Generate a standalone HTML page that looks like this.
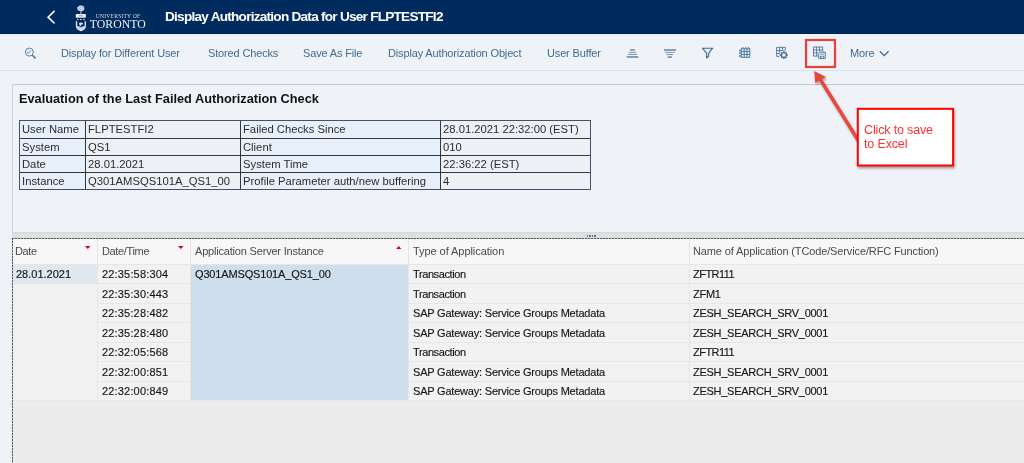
<!DOCTYPE html>
<html><head><meta charset="utf-8">
<style>
*{margin:0;padding:0;box-sizing:border-box}
html,body{width:1024px;height:463px;overflow:hidden;background:#eff3f8;font-family:"Liberation Sans",sans-serif;position:relative}
.a{position:absolute;white-space:nowrap}
.gs,.it,.tht,.tdt,.tbt,#title,#ptitle{will-change:transform}
#hdr{left:0;top:0;width:1024px;height:34px;background:#002b5e;border-bottom:1px solid #00234f}
#title{left:165px;top:10px;font-size:13.6px;line-height:14px;font-weight:bold;color:#fff;letter-spacing:-0.75px}
#tb{left:0;top:34px;width:1024px;height:37px;background:#eff3f8;border-bottom:1px solid #d8e2ed}
.tbt{top:47.4px;font-size:11px;line-height:12px;color:#3f6b92;letter-spacing:-0.15px}
#panel{left:12px;top:84px;width:1012px;height:149px;border-top:1px solid #c6c8cb;border-left:1px solid #cfd2d6;background:#eff3f8}
#ptitle{left:19px;top:91px;font-size:12.75px;font-weight:bold;color:#111}
#splitter{left:12px;top:232px;width:1012px;height:6px;background:linear-gradient(#d3d5d7 0,#dcdddd 1px,#e0e0e0 3px,#dfdfdf 6px)}
#dotsh{left:12px;top:238px;width:1012px;height:1px;background:repeating-linear-gradient(90deg,#5a5a5a 0 2px,#bdbdbd 2px 3px)}
#dotsv{left:12px;top:238px;width:1px;height:225px;background:repeating-linear-gradient(180deg,#5a5a5a 0 2px,#b8b8b8 2px 3px)}
#grid{left:13px;top:239px;width:1011px;height:224px;background:#ececec}
.th{top:0;height:25px;background:#f7f7f7;border-right:1px solid #e6e6e6;border-bottom:1px solid #e3e3e3}
.tht{font-size:11px;color:#444;top:7px}
.td{height:19.45px;background:#f2f2f2;border-bottom:1px solid #e3e3e3;border-right:1px solid #e3e3e3}
.tdt{font-size:11px;color:#1c1c1c}
.it{font-size:11.25px;color:#2c2c2c;line-height:12px}
.tht{font-size:11px;color:#4a4a4a;line-height:12px}
.tdt{font-size:11px;color:#161616;-webkit-text-stroke:0.15px #161616;line-height:12px}
table.info{position:absolute;left:19px;top:120px;border-collapse:collapse}
table.info td{border:1px solid #3a3f55;height:17.2px;font-size:11.25px;color:#222;padding:0 0 0 2px;vertical-align:middle;line-height:14px}
table.info td.l{background:#e6effa}
table.info td.v{background:#edf1f6}
</style></head><body>
<div id="hdr" class="a"></div>
<svg class="a" style="left:0;top:0" width="160" height="34">
  <polyline points="54.1,11.4 48.1,17.2 54.1,23" fill="none" stroke="#fff" stroke-width="1.6" stroke-linecap="round"/>
</svg>
<svg class="a gs" style="left:70px;top:0" width="90" height="34" viewBox="70 0 90 34">
 <path d="M77.2,9.2 Q76.6,7.4 78.2,6.5 Q79.2,5.3 81,5.6 Q83.2,5.3 84,7 Q85,8.6 83.8,10.2 Q82.6,11.4 80.9,11.1 Q78.6,11.3 77.2,9.2 Z" fill="#cdd5e0"/>
 <g fill="#8a9ab4">
  <circle cx="79.2" cy="8.2" r="0.55"/><circle cx="82.4" cy="7.5" r="0.55"/><circle cx="81" cy="9.8" r="0.5"/><circle cx="80.6" cy="7" r="0.4"/>
 </g>
 <rect x="80.4" y="10.8" width="1" height="3.3" fill="#c9d1dc"/>
 <rect x="75.8" y="14" width="10" height="3.7" fill="#eef1f5"/>
 <rect x="79" y="14.9" width="3.8" height="1.6" fill="#a6b2c6"/>
 <g fill="#c5cdd9">
  <rect x="77" y="18.8" width="1.5" height="1.3"/>
  <rect x="80.1" y="18.8" width="1.5" height="1.3"/>
  <rect x="83.2" y="18.8" width="1.5" height="1.3"/>
 </g>
 <path d="M76.5,21.3 L76.5,25.8 Q76.6,29.4 81,30.6 Q85.2,29.4 85.3,25.8 L85.3,21.3" fill="none" stroke="#dde3eb" stroke-width="1.4"/>
 <path d="M76.8,26.6 Q78.6,25.9 81,27.2 Q83.4,25.9 85.1,26.6 Q84.8,29.4 81,30.6 Q77.2,29.4 76.8,26.6 Z" fill="#dfe4ec"/>
 <path d="M78.4,28.4 Q81,27.4 83.6,28.4" fill="none" stroke="#6d7f9e" stroke-width="0.5"/>
 <path d="M79,23.3 Q80.8,21.9 82.8,23 Q83.4,24.2 82.2,24.5 Q81.1,24.3 80.8,25.4 L80.4,26.2 L79.6,25.8 Q80.1,24.8 79.3,24.5 Z" fill="#e8ecf1"/>
 <text x="95.8" y="17.8" font-family="Liberation Serif" font-size="5.6" fill="#d5dce7" letter-spacing="0.2">UNIVERSITY OF</text>
 <text x="89.8" y="27.9" font-family="Liberation Serif" font-size="11.8" fill="#eef1f6" letter-spacing="0">TORONTO</text>
</svg>

<div id="title" class="a">Display Authorization Data for User FLPTESTFI2</div>

<div id="tb" class="a"></div>
<div class="a tbt" style="left:61px">Display for Different User</div>
<div class="a tbt" style="left:208px">Stored Checks</div>
<div class="a tbt" style="left:303px">Save As File</div>
<div class="a tbt" style="left:388px">Display Authorization Object</div>
<div class="a tbt" style="left:547px">User Buffer</div>
<div class="a tbt" style="left:850px">More</div>

<svg class="a" style="left:0;top:0" width="1024" height="80" viewBox="0 0 1024 80">
 <g fill="none" stroke="#4a7399" stroke-width="0.9">
  <circle cx="29.35" cy="52.1" r="4"/>
  <polyline points="27.1,52.2 28.5,53.4 30.8,50.6" stroke-width="0.85"/>
  <line x1="32.4" y1="55.2" x2="35.6" y2="58.4" stroke-width="1.5"/>
 </g>
 <g fill="#819cb7">
  <rect x="630.2" y="49" width="4.6" height="1.8"/>
  <rect x="628.9" y="51.8" width="7.2" height="1.1"/>
  <rect x="627.9" y="53.9" width="9.2" height="1.1"/>
  <rect x="626.7" y="56" width="11.6" height="1.9"/>
  <rect x="663.9" y="49" width="12.1" height="1.9"/>
  <rect x="665" y="51.8" width="9.8" height="1.1"/>
  <rect x="666.4" y="54" width="6.8" height="1.1"/>
  <rect x="667.6" y="56.2" width="4.3" height="1.8"/>
 </g>
 <path d="M702.4,48.2 L712.7,48.2 L708.7,53.2 L708.6,56.3 L706.6,58 L706.6,53.2 Z" fill="none" stroke="#3f6d95" stroke-width="1.15" stroke-linejoin="round"/>
 <g fill="none" stroke="#3f6d95" stroke-width="0.9">
  <rect x="741.3" y="48.8" width="8.5" height="8.5"/>
  <line x1="744.2" y1="48.8" x2="744.2" y2="57.3"/>
  <line x1="747" y1="48.8" x2="747" y2="57.3"/>
  <line x1="741.3" y1="51.6" x2="749.8" y2="51.6"/>
  <line x1="741.3" y1="54.4" x2="749.8" y2="54.4"/>
 </g>
 <g fill="#5f86a8">
  <rect x="742.1" y="47.1" width="1.5" height="1.8" rx="0.6"/>
  <rect x="744.9" y="47.1" width="1.5" height="1.8" rx="0.6"/>
  <rect x="747.7" y="47.1" width="1.5" height="1.8" rx="0.6"/>
  <rect x="739.1" y="49.5" width="1.7" height="1.9"/>
  <rect x="739.1" y="52.3" width="1.7" height="1.9"/>
  <rect x="739.1" y="55.1" width="1.7" height="1.9"/>
 </g>
 <g fill="none" stroke="#4a7499" stroke-width="0.9">
  <path d="M779.6,56.4 L776.6,56.4 L776.6,47.4 L785.3,47.4 L785.3,50.5"/>
  <line x1="779.6" y1="47.4" x2="779.6" y2="56.4"/>
  <line x1="782.5" y1="47.4" x2="782.5" y2="51"/>
  <line x1="776.6" y1="50.5" x2="785.3" y2="50.5"/>
  <line x1="776.6" y1="53.5" x2="780" y2="53.5"/>
 </g>
 <g transform="translate(783.9,55.1)">
  <circle r="4.5" fill="#eff3f8"/>
  <path d="M2.82,-1.02 L3.83,-0.73 L3.83,0.73 L2.82,1.02 L2.71,1.28 L3.23,2.19 L2.19,3.23 L1.28,2.71 L1.02,2.82 L0.73,3.83 L-0.73,3.83 L-1.02,2.82 L-1.28,2.71 L-2.19,3.23 L-3.23,2.19 L-2.71,1.28 L-2.82,1.02 L-3.83,0.73 L-3.83,-0.73 L-2.82,-1.02 L-2.71,-1.28 L-3.23,-2.19 L-2.19,-3.23 L-1.28,-2.71 L-1.02,-2.82 L-0.73,-3.83 L0.73,-3.83 L1.02,-2.82 L1.28,-2.71 L2.19,-3.23 L3.23,-2.19 L2.71,-1.28 Z" fill="#4a7499"/>
  <circle r="1.75" fill="#eff3f8"/>
 </g>
 <g fill="none" stroke="#4a7499" stroke-width="0.9">
  <path d="M818.2,56.1 L813.5,56.1 L813.5,47 L822.7,47 L822.7,51.7"/>
  <line x1="816.6" y1="47" x2="816.6" y2="56.1"/>
  <line x1="819.6" y1="47" x2="819.6" y2="51.7"/>
  <line x1="813.5" y1="50" x2="822.7" y2="50"/>
  <line x1="813.5" y1="53" x2="818.2" y2="53"/>
  <path d="M819.9,52.2 L825.3,52.2 L825.3,58.4 L818.7,58.4 L818.7,53.4 Z" fill="#eff3f8"/>
  <line x1="820.2" y1="54.1" x2="824.2" y2="54.1" stroke-width="0.8"/>
  <rect x="820.6" y="56.2" width="3.2" height="2.2" stroke-width="0.8"/>
 </g>
 <rect x="806" y="40" width="29" height="27" fill="none" stroke="#e8413b" stroke-width="2.2"/>
 <polyline points="879.8,51.2 884.2,55.6 888.6,51.2" fill="none" stroke="#3a6a93" stroke-width="1.3"/>
</svg>

<div id="panel" class="a"></div>
<div id="ptitle" class="a">Evaluation of the Last Failed Authorization Check</div>
<div class="a" style="left:19px;top:120px;width:66px;height:69px;background:#e6effa"></div>
<div class="a" style="left:85px;top:120px;width:155px;height:69px;background:#edf1f6"></div>
<div class="a" style="left:240px;top:120px;width:200px;height:69px;background:#e6effa"></div>
<div class="a" style="left:440px;top:120px;width:150px;height:69px;background:#edf1f6"></div>
<div class="a" style="left:85px;top:120px;width:1px;height:70px;background:#34363f"></div>
<div class="a" style="left:240px;top:120px;width:1px;height:70px;background:#34363f"></div>
<div class="a" style="left:440px;top:120px;width:1px;height:70px;background:#34363f"></div>
<div class="a" style="left:19px;top:138px;width:572px;height:1px;background:#34363f"></div>
<div class="a" style="left:19px;top:155px;width:572px;height:1px;background:#34363f"></div>
<div class="a" style="left:19px;top:172px;width:572px;height:1px;background:#34363f"></div>
<div class="a" style="left:19px;top:120px;width:572px;height:70px;border:1px solid #4a4e6d"></div>
<div class="a it" style="left:22px;top:123px">User Name</div>
<div class="a it" style="left:88px;top:123px">FLPTESTFI2</div>
<div class="a it" style="left:243px;top:123px">Failed Checks Since</div>
<div class="a it" style="left:443px;top:123px">28.01.2021 22:32:00 (EST)</div>
<div class="a it" style="left:22px;top:141px">System</div>
<div class="a it" style="left:88px;top:141px">QS1</div>
<div class="a it" style="left:243px;top:141px">Client</div>
<div class="a it" style="left:443px;top:141px">010</div>
<div class="a it" style="left:22px;top:158px">Date</div>
<div class="a it" style="left:88px;top:158px">28.01.2021</div>
<div class="a it" style="left:243px;top:158px">System Time</div>
<div class="a it" style="left:443px;top:158px">22:36:22 (EST)</div>
<div class="a it" style="left:22px;top:175px">Instance</div>
<div class="a it" style="left:88px;top:175px">Q301AMSQS101A_QS1_00</div>
<div class="a it" style="left:243px;top:175px">Profile Parameter auth/new buffering</div>
<div class="a it" style="left:443px;top:175px">4</div>


<div id="splitter" class="a"></div>
<div id="dotsh" class="a"></div>
<div class="a" style="left:587px;top:235px;width:10px;height:2px;background:repeating-linear-gradient(90deg,#4a77a5 0 1.5px,transparent 1.5px 2.5px)"></div>
<div id="grid" class="a"></div>
<div class="a" style="left:13px;top:239px;width:1011px;height:25px;background:#f7f7f7"></div>
<div class="a" style="left:13px;top:264px;width:1011px;height:136px;background:#f2f2f2"></div>
<div class="a" style="left:13px;top:264px;width:84px;height:19px;background:#dfe7f0"></div>
<div class="a" style="left:191px;top:264px;width:217px;height:136px;background:#cfdeed"></div>
<div class="a" style="left:13px;top:264px;width:1011px;height:1px;background:#e6e6e6"></div>
<div class="a" style="left:13px;top:283px;width:84px;height:1px;background:#e6e6e6"></div>
<div class="a" style="left:98px;top:283px;width:92px;height:1px;background:#e7e7e7"></div>
<div class="a" style="left:409px;top:283px;width:615px;height:1px;background:#e7e7e7"></div>
<div class="a" style="left:98px;top:303px;width:92px;height:1px;background:#e7e7e7"></div>
<div class="a" style="left:409px;top:303px;width:615px;height:1px;background:#e7e7e7"></div>
<div class="a" style="left:98px;top:322px;width:92px;height:1px;background:#e7e7e7"></div>
<div class="a" style="left:409px;top:322px;width:615px;height:1px;background:#e7e7e7"></div>
<div class="a" style="left:98px;top:342px;width:92px;height:1px;background:#e7e7e7"></div>
<div class="a" style="left:409px;top:342px;width:615px;height:1px;background:#e7e7e7"></div>
<div class="a" style="left:98px;top:361px;width:92px;height:1px;background:#e7e7e7"></div>
<div class="a" style="left:409px;top:361px;width:615px;height:1px;background:#e7e7e7"></div>
<div class="a" style="left:98px;top:381px;width:92px;height:1px;background:#e7e7e7"></div>
<div class="a" style="left:409px;top:381px;width:615px;height:1px;background:#e7e7e7"></div>
<div class="a" style="left:98px;top:400px;width:92px;height:1px;background:#e7e7e7"></div>
<div class="a" style="left:409px;top:400px;width:615px;height:1px;background:#e7e7e7"></div>
<div class="a" style="left:13px;top:400px;width:1011px;height:1px;background:#e7e7e7"></div>
<div class="a" style="left:97px;top:239px;width:1px;height:161px;background:#e6e6e6"></div>
<div class="a" style="left:190px;top:239px;width:1px;height:161px;background:#e6e6e6"></div>
<div class="a" style="left:408px;top:239px;width:1px;height:161px;background:#e6e6e6"></div>
<div class="a" style="left:689px;top:239px;width:1px;height:161px;background:#e6e6e6"></div>
<div class="a tht" style="left:15.1px;top:245px;letter-spacing:-0.37px">Date</div>
<div class="a tht" style="left:101.6px;top:245px;letter-spacing:-0.35px">Date/Time</div>
<div class="a tht" style="left:194.8px;top:245px;letter-spacing:-0.19px">Application Server Instance</div>
<div class="a tht" style="left:413px;top:245px;letter-spacing:-0.06px">Type of Application</div>
<div class="a tht" style="left:692.9px;top:245px;letter-spacing:-0.13px">Name of Application (TCode/Service/RFC Function)</div>
<svg class="a" style="left:85px;top:245.5px" width="6" height="3.5"><polygon points="0,0 5.5,0 2.75,3" fill="#d0021b"/></svg>
<svg class="a" style="left:177.7px;top:245.5px" width="6" height="3.5"><polygon points="0,0 5.5,0 2.75,3" fill="#d0021b"/></svg>
<svg class="a" style="left:395.9px;top:245.5px" width="6" height="3.5"><polygon points="0,3.2 2.75,0 5.5,3.2" fill="#d0021b"/></svg>
<div class="a tdt" style="left:16.1px;top:268.30px;letter-spacing:0px">28.01.2021</div>
<div class="a tdt" style="left:101.8px;top:268.30px;letter-spacing:0.17px">22:35:58:304</div>
<div class="a tdt" style="left:195px;top:268.30px;letter-spacing:-0.16px">Q301AMSQS101A_QS1_00</div>
<div class="a tdt" style="left:413px;top:268.30px;letter-spacing:-0.4px">Transaction</div>
<div class="a tdt" style="left:692.9px;top:268.30px;letter-spacing:-0.53px">ZFTR111</div>
<div class="a tdt" style="left:101.8px;top:287.75px;letter-spacing:0.17px">22:35:30:443</div>
<div class="a tdt" style="left:413px;top:287.75px;letter-spacing:-0.4px">Transaction</div>
<div class="a tdt" style="left:692.9px;top:287.75px;letter-spacing:-0.27px">ZFM1</div>
<div class="a tdt" style="left:101.8px;top:307.20px;letter-spacing:0.17px">22:35:28:482</div>
<div class="a tdt" style="left:413px;top:307.20px;letter-spacing:-0.2px">SAP Gateway: Service Groups Metadata</div>
<div class="a tdt" style="left:692.9px;top:307.20px;letter-spacing:-0.27px">ZESH_SEARCH_SRV_0001</div>
<div class="a tdt" style="left:101.8px;top:326.65px;letter-spacing:0.17px">22:35:28:480</div>
<div class="a tdt" style="left:413px;top:326.65px;letter-spacing:-0.2px">SAP Gateway: Service Groups Metadata</div>
<div class="a tdt" style="left:692.9px;top:326.65px;letter-spacing:-0.27px">ZESH_SEARCH_SRV_0001</div>
<div class="a tdt" style="left:101.8px;top:346.10px;letter-spacing:0.17px">22:32:05:568</div>
<div class="a tdt" style="left:413px;top:346.10px;letter-spacing:-0.4px">Transaction</div>
<div class="a tdt" style="left:692.9px;top:346.10px;letter-spacing:-0.53px">ZFTR111</div>
<div class="a tdt" style="left:101.8px;top:365.55px;letter-spacing:0.17px">22:32:00:851</div>
<div class="a tdt" style="left:413px;top:365.55px;letter-spacing:-0.2px">SAP Gateway: Service Groups Metadata</div>
<div class="a tdt" style="left:692.9px;top:365.55px;letter-spacing:-0.27px">ZESH_SEARCH_SRV_0001</div>
<div class="a tdt" style="left:101.8px;top:385.00px;letter-spacing:0.17px">22:32:00:849</div>
<div class="a tdt" style="left:413px;top:385.00px;letter-spacing:-0.2px">SAP Gateway: Service Groups Metadata</div>
<div class="a tdt" style="left:692.9px;top:385.00px;letter-spacing:-0.27px">ZESH_SEARCH_SRV_0001</div>

<div id="dotsv" class="a"></div>
<svg class="a" style="left:0;top:0" width="1024" height="463">
 <defs>
  <filter id="sh" x="-20%" y="-20%" width="140%" height="140%"><feGaussianBlur in="SourceAlpha" stdDeviation="1.2"/><feOffset dx="1" dy="1.5"/><feComponentTransfer><feFuncA type="linear" slope="0.35"/></feComponentTransfer><feMerge><feMergeNode/><feMergeNode in="SourceGraphic"/></feMerge></filter>
 </defs>
 <g filter="url(#sh)">
  <line x1="820" y1="79" x2="858" y2="140" stroke="#e8463e" stroke-width="3.4"/>
  <polygon points="814.2,70.9 826,77 815.2,83" fill="#e8463e"/>
 </g>
 <rect x="857.8" y="108.8" width="95.3" height="56.7" fill="#fff" stroke="#ff0000" stroke-width="2" filter="url(#sh)"/>
</svg>
<div class="a gs" style="left:863.5px;top:124px;font-size:12.5px;line-height:13.8px;color:#ff3030;letter-spacing:-0.15px">Click to save<br>to Excel</div>

</body></html>
